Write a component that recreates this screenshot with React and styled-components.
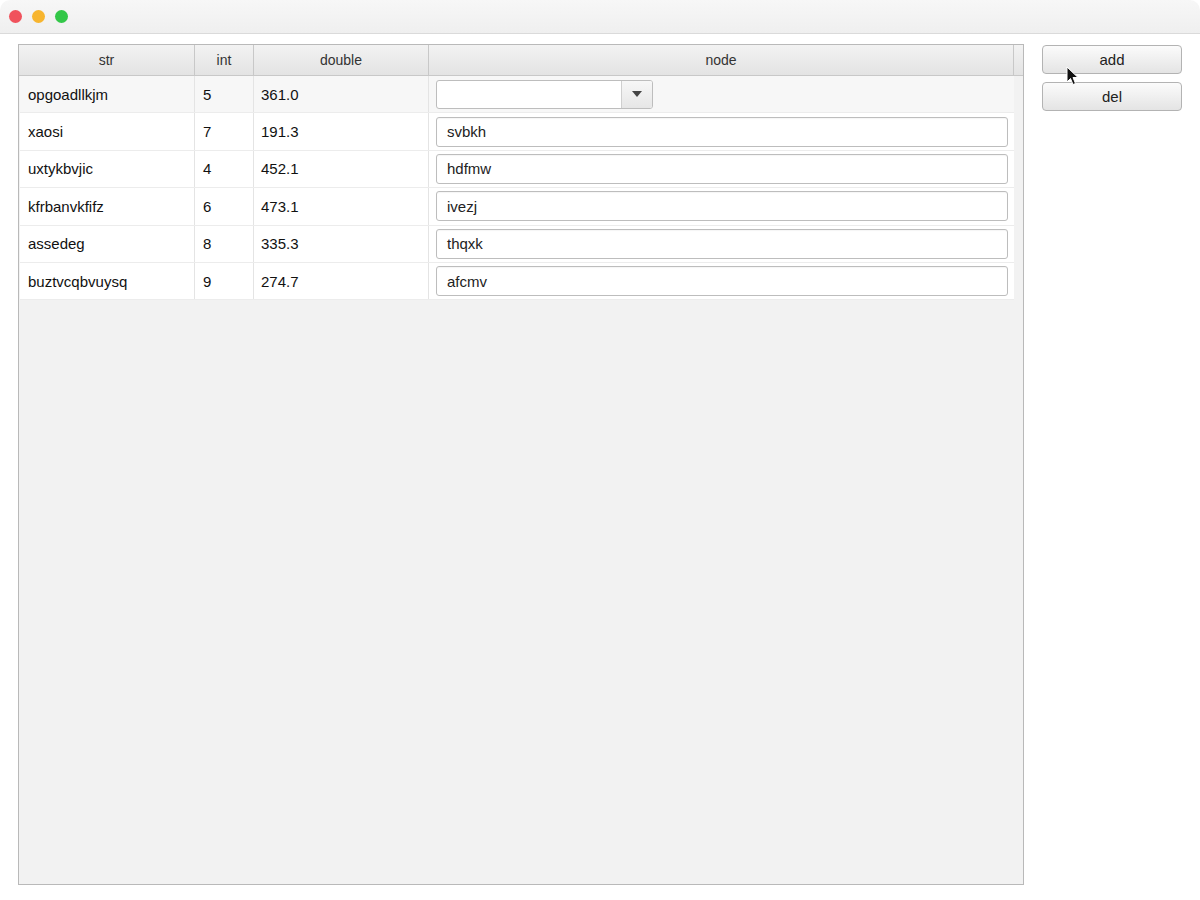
import styled, { createGlobalStyle } from "styled-components";

const Global = createGlobalStyle`
  html, body {
    margin: 0;
    padding: 0;
    background: #ffffff;
  }
  body {
    font-family: "Liberation Sans", Arial, sans-serif;
  }
`;

const Window = styled.div`
  position: relative;
  width: 1200px;
  height: 900px;
  background: #ffffff;
  border-radius: 10px;
  overflow: hidden;
  display: flex;
  flex-direction: column;
`;

const TitleBar = styled.div`
  height: 33px;
  flex: none;
  background: linear-gradient(#f7f7f7, #efefef);
  border-bottom: 1px solid #dadada;
  display: flex;
  align-items: center;
  gap: 10px;
  padding-left: 9px;
`;

const Light = styled.span`
  width: 13px;
  height: 13px;
  border-radius: 50%;
  background: ${(p) => p.$c};
`;

const Body = styled.div`
  flex: 1;
  display: flex;
  gap: 18px;
  padding: 10px 18px 15px 18px;
  min-height: 0;
`;

const Table = styled.div`
  width: 1006px;
  box-sizing: border-box;
  border: 1px solid #b9b9b9;
  background: #f2f2f2;
  padding: 0 1px 1px 1px;
  display: flex;
  flex-direction: column;
`;

const Header = styled.div`
  display: flex;
  height: 30px;
  margin: 0 -1px;
  background: linear-gradient(#f2f2f2, #e3e3e3);
  border-bottom: 1px solid #c8c8c8;
`;

const HeadCell = styled.div`
  width: ${(p) => p.$w}px;
  flex: none;
  box-sizing: border-box;
  border-right: 1px solid #c8c8c8;
  display: flex;
  align-items: center;
  justify-content: center;
  font-size: 14px;
  color: #333;
`;

const HeadFill = styled.div`
  flex: 1;
`;

const Row = styled.div`
  display: flex;
  height: 37.4px;
  width: 994px;
  box-sizing: border-box;
  background: ${(p) => (p.$alt ? "#f7f7f7" : "#ffffff")};
  border-bottom: 1px solid #ececec;
`;

const Cell = styled.div`
  width: ${(p) => p.$w}px;
  flex: none;
  box-sizing: border-box;
  border-right: ${(p) => (p.$last ? "none" : "1px solid #e4e4e4")};
  display: flex;
  align-items: center;
  padding-left: ${(p) => p.$pad}px;
  font-size: 15px;
  color: #111;
`;

const TextInput = styled.div`
  width: 572px;
  height: 30px;
  box-sizing: border-box;
  border: 1px solid #bdbdbd;
  border-radius: 3px;
  background: #fff;
  display: flex;
  align-items: center;
  padding-left: 10px;
  font-size: 15px;
  color: #222;
  box-shadow: inset 0 1px 1px rgba(0, 0, 0, 0.04);
`;

const Combo = styled.div`
  width: 217px;
  height: 29px;
  box-sizing: border-box;
  border: 1px solid #bdbdbd;
  border-radius: 3px;
  background: #fff;
  display: flex;
  overflow: hidden;
`;

const ComboField = styled.div`
  flex: 1;
`;

const ComboArrow = styled.div`
  width: 30px;
  border-left: 1px solid #cfcfcf;
  background: linear-gradient(#f7f7f7, #e6e6e6);
  display: flex;
  align-items: center;
  justify-content: center;
`;

const Side = styled.div`
  display: flex;
  flex-direction: column;
  gap: 8px;
  padding-top: 1px;
`;

const Button = styled.div`
  width: 140px;
  height: 29px;
  box-sizing: border-box;
  border: 1px solid #b3b3b3;
  border-radius: 4px;
  background: linear-gradient(#fbfbfb, #e4e4e4);
  display: flex;
  align-items: center;
  justify-content: center;
  font-size: 15px;
  color: #222;
`;

const Pointer = styled.svg`
  position: absolute;
  left: 1066px;
  top: 66px;
`;

const cols = [175, 59, 175, 585];

const rows = [
  ["opgoadllkjm", "5", "361.0", null],
  ["xaosi", "7", "191.3", "svbkh"],
  ["uxtykbvjic", "4", "452.1", "hdfmw"],
  ["kfrbanvkfifz", "6", "473.1", "ivezj"],
  ["assedeg", "8", "335.3", "thqxk"],
  ["buztvcqbvuysq", "9", "274.7", "afcmv"],
];

export default function App() {
  return (
    <Window>
      <Global />
      <TitleBar>
        <Light $c="#f0525c" />
        <Light $c="#f7b52f" />
        <Light $c="#33c748" />
      </TitleBar>
      <Body>
        <Table>
          <Header>
            <HeadCell $w={176}>str</HeadCell>
            <HeadCell $w={59}>int</HeadCell>
            <HeadCell $w={175}>double</HeadCell>
            <HeadCell $w={585}>node</HeadCell>
            <HeadFill />
          </Header>
          {rows.map((r, i) => (
            <Row key={i} $alt={i === 0}>
              <Cell $w={cols[0]} $pad={8}>{r[0]}</Cell>
              <Cell $w={cols[1]} $pad={8}>{r[1]}</Cell>
              <Cell $w={cols[2]} $pad={7}>{r[2]}</Cell>
              <Cell $w={cols[3]} $pad={7} $last>
                {r[3] === null ? (
                  <Combo>
                    <ComboField />
                    <ComboArrow>
                      <svg width="10" height="6" viewBox="0 0 10 6">
                        <path d="M0 0 L10 0 L5 6 Z" fill="#444" />
                      </svg>
                    </ComboArrow>
                  </Combo>
                ) : (
                  <TextInput>{r[3]}</TextInput>
                )}
              </Cell>
            </Row>
          ))}
        </Table>
        <Side>
          <Button>add</Button>
          <Button>del</Button>
        </Side>
      </Body>
      <Pointer width="14" height="22" viewBox="0 0 14 22">
        <path
          d="M1 1 L1 16 L4.5 12.5 L7 18.5 L9.5 17.5 L7 11.5 L12 11.5 Z"
          fill="#111"
          stroke="#fff"
          strokeWidth="1"
        />
      </Pointer>
    </Window>
  );
}
